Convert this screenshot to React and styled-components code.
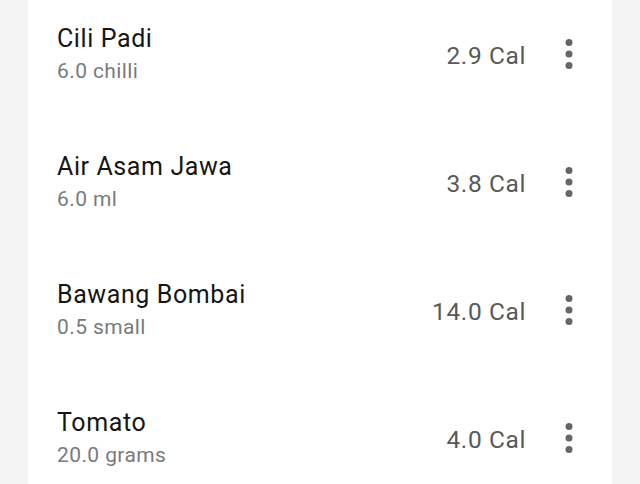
import React from "react";
import styled, { createGlobalStyle } from "styled-components";

const Global = createGlobalStyle`
  html, body { margin: 0; padding: 0; background: #f4f4f4; }
  body { font-family: Roboto, "Liberation Sans", sans-serif; overflow: hidden; }
`;

const Page = styled.div`
  height: 484px;
  overflow: hidden;
  padding: 0 28px;
`;

const Card = styled.div`
  background: #ffffff;
  margin-top: -10px;
  display: flex;
  flex-direction: column;
`;

const Row = styled.div`
  height: 128px;
  display: flex;
  align-items: center;
  padding: 0 36px 0 29px;
`;

const Info = styled.div`
  flex: 1;
  display: flex;
  flex-direction: column;
  gap: 5px;
  padding-bottom: 2px;
`;

const Title = styled.div`
  font-size: 25px;
  line-height: 30px;
  letter-spacing: 0.6px;
  color: #161616;
`;

const Sub = styled.div`
  font-size: 21px;
  line-height: 24px;
  letter-spacing: 0.4px;
  color: #7a7a7a;
`;

const Cal = styled.div`
  font-size: 24.5px;
  letter-spacing: 0.6px;
  color: #5a5a5a;
  margin-right: 36px;
  padding-top: 3px;
`;

const Dots = styled.svg`
  width: 14px;
  height: 32px;
  display: block;
`;

const items = [
  { name: "Cili Padi", amount: "6.0 chilli", cal: "2.9 Cal" },
  { name: "Air Asam Jawa", amount: "6.0 ml", cal: "3.8 Cal" },
  { name: "Bawang Bombai", amount: "0.5 small", cal: "14.0 Cal" },
  { name: "Tomato", amount: "20.0 grams", cal: "4.0 Cal" },
];

export default function App() {
  return (
    <>
      <Global />
      <Page>
        <Card>
          {items.map((it) => (
            <Row key={it.name}>
              <Info>
                <Title>{it.name}</Title>
                <Sub>{it.amount}</Sub>
              </Info>
              <Cal>{it.cal}</Cal>
              <Dots viewBox="0 0 14 32">
                <circle cx="7" cy="4.5" r="3.5" fill="#666" />
                <circle cx="7" cy="16" r="3.5" fill="#666" />
                <circle cx="7" cy="27.5" r="3.5" fill="#666" />
              </Dots>
            </Row>
          ))}
        </Card>
      </Page>
    </>
  );
}
